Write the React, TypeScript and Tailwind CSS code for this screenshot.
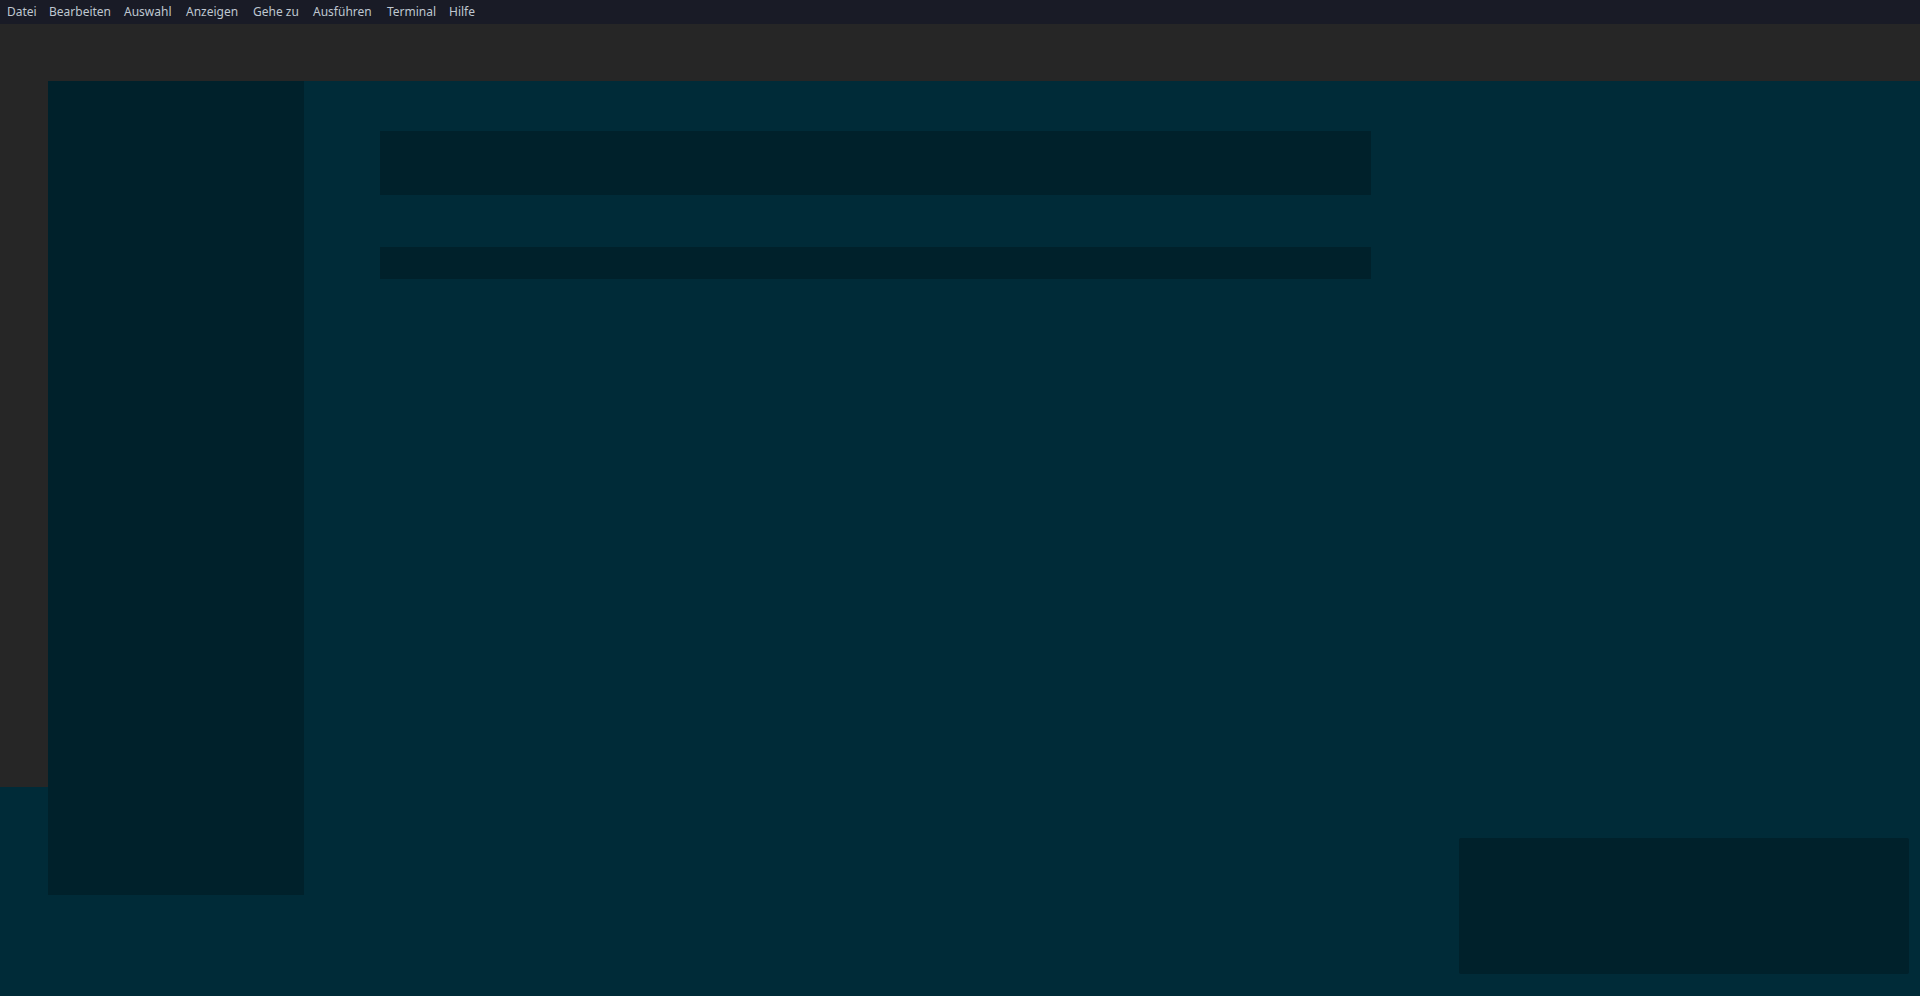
const menu = [
  { label: 'Datei', w: 'w-[42px]' },
  { label: 'Bearbeiten', w: 'w-[75px]' },
  { label: 'Auswahl', w: 'w-[62px]' },
  { label: 'Anzeigen', w: 'w-[67px]' },
  { label: 'Gehe zu', w: 'w-[60px]' },
  { label: 'Ausführen', w: 'w-[74px]' },
  { label: 'Terminal', w: 'w-[62px]' },
  { label: 'Hilfe', w: 'w-[40px]' },
];

export default function App() {
  return (
    <div
      className="relative flex h-[996px] w-[1920px] flex-col overflow-hidden bg-[#002b38]"
      style={{ fontFamily: '"Noto Sans", "Open Sans", sans-serif' }}
    >
      {/* Menüleiste */}
      <div className="flex h-[24px] shrink-0 items-center bg-[#191b26] pl-[7px]">
        {menu.map((item) => (
          <span
            key={item.label}
            className={`${item.w} shrink-0 whitespace-nowrap text-[12px] leading-[24px] text-[#bfc7d0]`}
          >
            {item.label}
          </span>
        ))}
      </div>

      {/* Werkzeugleiste */}
      <div className="h-[57px] shrink-0 bg-[#262626]" />

      <div className="flex flex-1">
        <div className="h-[706px] w-[48px] shrink-0 bg-[#262626]" />
        <aside className="h-[814px] w-[256px] shrink-0 bg-[#00212b]" />
        <main className="flex flex-1 flex-col pl-[76px] pt-[50px]">
          <div className="h-[64px] w-[991px] bg-[#00212b]" />
          <div className="mt-[52px] h-[32px] w-[991px] bg-[#00212b]" />
        </main>
      </div>

      {/* Benachrichtigung */}
      <div className="absolute bottom-[22px] right-[11px] h-[136px] w-[450px] rounded-[2px] bg-[#00212b]" />
    </div>
  );
}
